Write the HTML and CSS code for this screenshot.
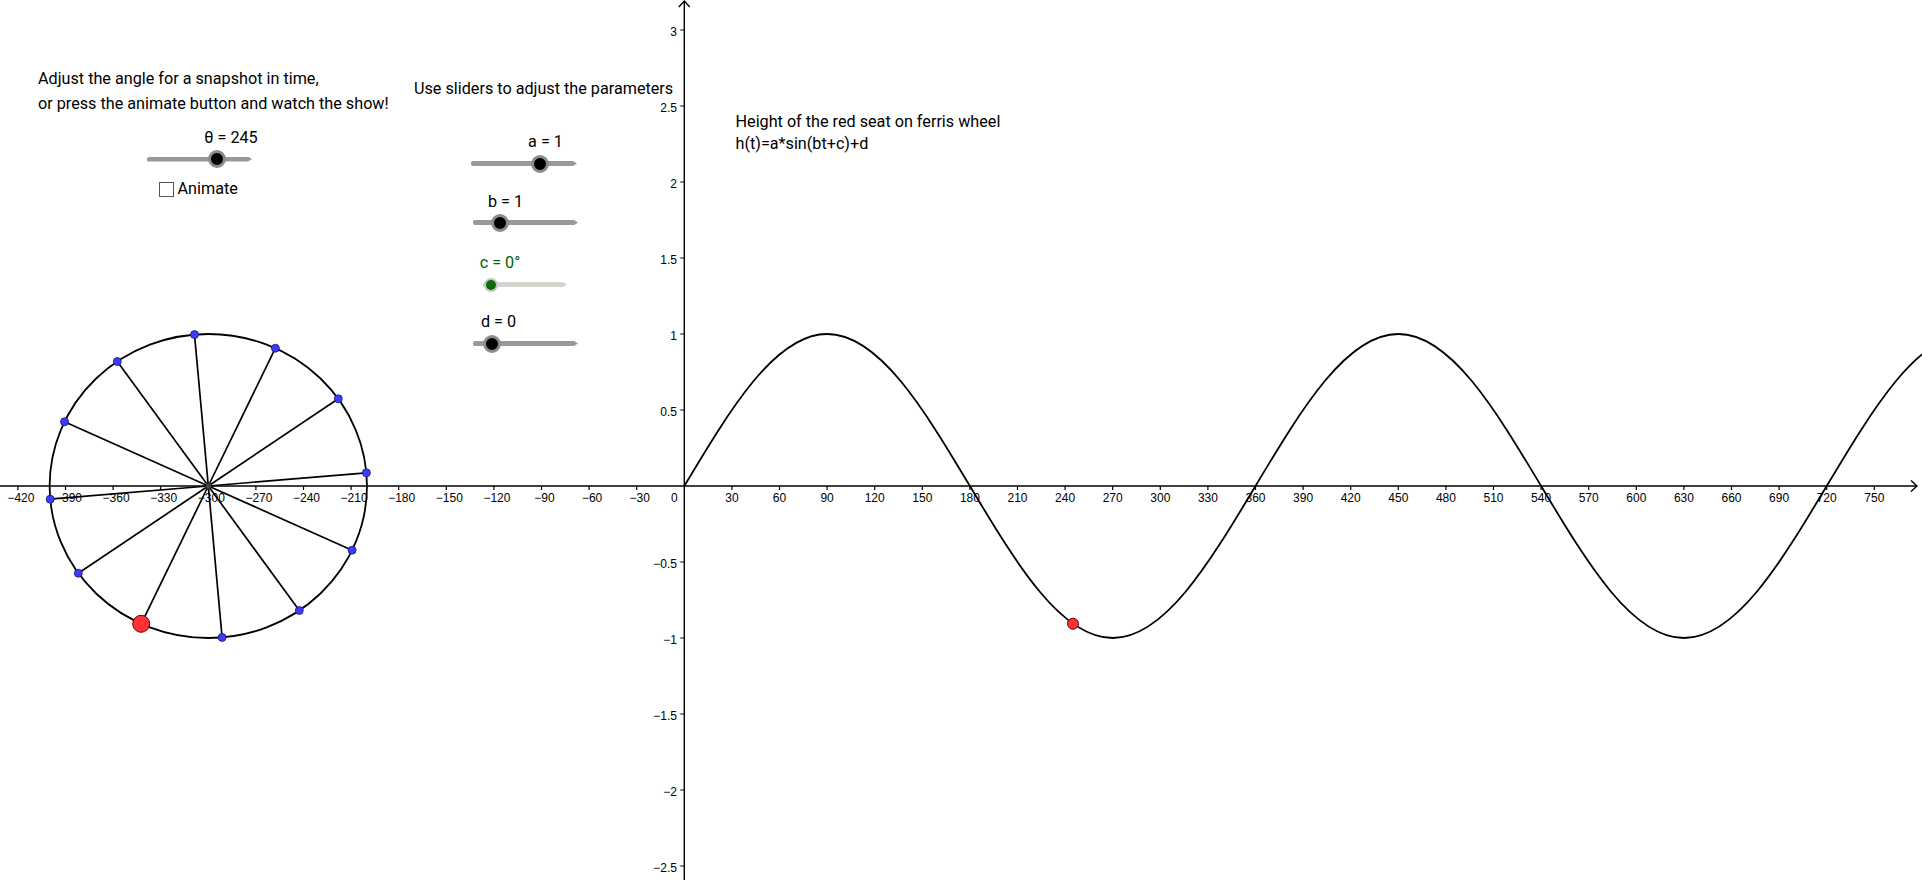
FILE: index.html
```html
<!DOCTYPE html>
<html>
<head>
<meta charset="utf-8">
<title>Ferris wheel</title>
<link rel="stylesheet" href="styles.css">
</head>
<body>
<div class="canvas">
  <svg class="graph" width="1922" height="880" viewBox="0 0 1922 880">
    <!-- axes -->
    <g class="axis">
      <line x1="0" y1="486" x2="1917" y2="486"/>
      <polyline points="1911,480.5 1917,486 1911,491.5" fill="none"/>
      <line x1="684.3" y1="880" x2="684.3" y2="1"/>
      <polyline points="678.8,7 684.3,1 689.8,7" fill="none"/>
    </g>
    <g class="ticks" transform="translate(684.3,486)">
      <path d="M-666.4,0v4M-618.8,0v4M-571.2,0v4M-523.6,0v4M-476,0v4M-428.4,0v4M-380.8,0v4M-333.2,0v4M-285.6,0v4M-238,0v4M-190.4,0v4M-142.8,0v4M-95.2,0v4M-47.6,0v4M47.6,0v4M95.2,0v4M142.8,0v4M190.4,0v4M238,0v4M285.6,0v4M333.2,0v4M380.8,0v4M428.4,0v4M476,0v4M523.6,0v4M571.2,0v4M618.8,0v4M666.4,0v4M714,0v4M761.6,0v4M809.2,0v4M856.8,0v4M904.4,0v4M952,0v4M999.6,0v4M1047.2,0v4M1094.8,0v4M1142.4,0v4M1190,0v4"/>
      <path d="M-4,-456h4M-4,-380h4M-4,-304h4M-4,-228h4M-4,-152h4M-4,-76h4M-4,76h4M-4,152h4M-4,228h4M-4,304h4M-4,380h4"/>
    </g>
    <g class="xlabels" transform="translate(684.3,502)">
      <text x="-663.4">−420</text><text x="-615.8">−390</text><text x="-568.2">−360</text><text x="-520.6">−330</text><text x="-473">−300</text><text x="-425.4">−270</text><text x="-377.8">−240</text><text x="-330.2">−210</text><text x="-282.6">−180</text><text x="-235">−150</text><text x="-187.4">−120</text><text x="-139.8">−90</text><text x="-92.2">−60</text><text x="-44.6">−30</text>
      <text x="-10">0</text>
      <text x="47.6">30</text><text x="95.2">60</text><text x="142.8">90</text><text x="190.4">120</text><text x="238">150</text><text x="285.6">180</text><text x="333.2">210</text><text x="380.8">240</text><text x="428.4">270</text><text x="476">300</text><text x="523.6">330</text><text x="571.2">360</text><text x="618.8">390</text><text x="666.4">420</text><text x="714">450</text><text x="761.6">480</text><text x="809.2">510</text><text x="856.8">540</text><text x="904.4">570</text><text x="952">600</text><text x="999.6">630</text><text x="1047.2">660</text><text x="1094.8">690</text><text x="1142.4">720</text><text x="1190">750</text>
    </g>
    <g class="ylabels" transform="translate(677,491.8)">
      <text y="-456">3</text><text y="-380">2.5</text><text y="-304">2</text><text y="-228">1.5</text><text y="-152">1</text><text y="-76">0.5</text><text y="76">−0.5</text><text y="152">−1</text><text y="228">−1.5</text><text y="304">−2</text><text y="380">−2.5</text>
    </g>

    <!-- sine curve -->
    <path class="curve" transform="translate(684.3,486) scale(90.91,-152)"
      d="M0,0 c0.5123,0.5123 1.0023,1 1.5708,1 c0.5685,0 1.0585,-0.4877 1.5708,-1 c0.5123,-0.5123 1.0023,-1 1.5708,-1 c0.5685,0 1.0585,0.4877 1.5708,1 c0.5123,0.5123 1.0023,1 1.5708,1 c0.5685,0 1.0585,-0.4877 1.5708,-1 c0.5123,-0.5123 1.0023,-1 1.5708,-1 c0.5685,0 1.0585,0.4877 1.5708,1 c0.5123,0.5123 1.0023,1 1.5708,1"/>

    <!-- ferris wheel -->
    <ellipse class="wheel" cx="208.3" cy="486" rx="158.67" ry="152"/>
    <g class="spokes">
      <line x1="208.3" y1="486" x2="141.2" y2="623.8"/>
      <line x1="208.3" y1="486" x2="222.1" y2="637.4"/>
      <line x1="208.3" y1="486" x2="299.3" y2="610.5"/>
      <line x1="208.3" y1="486" x2="352.1" y2="550.2"/>
      <line x1="208.3" y1="486" x2="366.4" y2="472.8"/>
      <line x1="208.3" y1="486" x2="338.3" y2="398.8"/>
      <line x1="208.3" y1="486" x2="275.4" y2="348.2"/>
      <line x1="208.3" y1="486" x2="194.5" y2="334.6"/>
      <line x1="208.3" y1="486" x2="117.3" y2="361.5"/>
      <line x1="208.3" y1="486" x2="64.5" y2="421.8"/>
      <line x1="208.3" y1="486" x2="50.2" y2="499.2"/>
      <line x1="208.3" y1="486" x2="78.3" y2="573.2"/>
    </g>
    <g class="seats">
      <circle cx="222.1" cy="637.4" r="4"/>
      <circle cx="299.3" cy="610.5" r="4"/>
      <circle cx="352.1" cy="550.2" r="4"/>
      <circle cx="366.4" cy="472.8" r="4"/>
      <circle cx="338.3" cy="398.8" r="4"/>
      <circle cx="275.4" cy="348.2" r="4"/>
      <circle cx="194.5" cy="334.6" r="4"/>
      <circle cx="117.3" cy="361.5" r="4"/>
      <circle cx="64.5" cy="421.8" r="4"/>
      <circle cx="50.2" cy="499.2" r="4"/>
      <circle cx="78.3" cy="573.2" r="4"/>
    </g>
    <circle class="hub" cx="208.3" cy="486" r="3"/>
    <circle class="red big" cx="141.2" cy="623.8" r="8.5"/>
    <circle class="red" cx="1073" cy="623.7" r="5.5"/>
  </svg>

  <div class="note note-left">Adjust the angle for a snapshot in time,<br>or press the animate button and watch the show!</div>
  <div class="note note-mid">Use sliders to adjust the parameters</div>
  <div class="note note-right">Height of the red seat on ferris wheel<br>h(t)=a*sin(bt+c)+d</div>

  <div class="label lab-theta">θ = 245</div>
  <div class="slider sl-theta"><div class="track"></div><div class="knob" style="left:70px"></div></div>
  <div class="check"><span class="box"></span><span class="check-text">Animate</span></div>

  <div class="label lab-a">a = 1</div>
  <div class="slider sl-a"><div class="track"></div><div class="knob" style="left:69px"></div></div>

  <div class="label lab-b">b = 1</div>
  <div class="slider sl-b"><div class="track"></div><div class="knob" style="left:27px"></div></div>

  <div class="label lab-c">c = 0°</div>
  <div class="slider sl-c light"><div class="track"></div><div class="knob" style="left:8px"></div></div>

  <div class="label lab-d">d = 0</div>
  <div class="slider sl-d"><div class="track"></div><div class="knob" style="left:19px"></div></div>
</div>
</body>
</html>
```

FILE: styles.css
```css
html, body {
  margin: 0;
  padding: 0;
  background: #ffffff;
}

.canvas {
  position: relative;
  width: 1922px;
  height: 880px;
  overflow: hidden;
  background: #ffffff;
  font-family: Roboto, "Noto Sans", "Liberation Sans", sans-serif;
  color: #000000;
}

.graph {
  position: absolute;
  left: 0;
  top: 0;
  display: block;
}

.axis line,
.axis polyline {
  stroke: #000000;
  stroke-width: 1.4;
}

.ticks path {
  stroke: #000000;
  stroke-width: 1.2;
  fill: none;
}

.xlabels text,
.ylabels text {
  font-family: "Liberation Sans", Arial, sans-serif;
  font-size: 12px;
  fill: #000000;
}

.xlabels text {
  text-anchor: middle;
}

.ylabels text {
  text-anchor: end;
}

.curve {
  fill: none;
  stroke: #000000;
  stroke-width: 1.8;
  vector-effect: non-scaling-stroke;
}

.wheel {
  fill: none;
  stroke: #000000;
  stroke-width: 1.8;
}

.spokes line {
  stroke: #000000;
  stroke-width: 1.7;
}

.seats circle {
  fill: #3b3bff;
  stroke: #1a1a66;
  stroke-width: 0.8;
}

.hub {
  fill: #444444;
  stroke: #222222;
  stroke-width: 0.6;
}

.red {
  fill: #ff3333;
  stroke: #6a0000;
  stroke-width: 1;
}

.note {
  position: absolute;
  font-size: 16.2px;
  white-space: nowrap;
}

.note-left {
  left: 38px;
  top: 65.5px;
  line-height: 25px;
}

.note-mid {
  left: 414px;
  top: 79px;
  line-height: 20px;
}

.note-right {
  left: 735.5px;
  top: 110.5px;
  line-height: 22.6px;
}

.label {
  position: absolute;
  font-size: 16.2px;
  line-height: 20px;
  white-space: nowrap;
  transform: translateX(-50%);
}

.lab-theta { left: 231px; top: 128px; }
.lab-a { left: 545.5px; top: 131.5px; }
.lab-b { left: 505.5px; top: 191.5px; }
.lab-c { left: 500px; top: 252.5px; color: #006400; }
.lab-d { left: 498.5px; top: 312px; }

.slider {
  position: absolute;
  height: 18px;
}

.slider .track {
  position: absolute;
  left: 0;
  right: 0;
  top: 6.5px;
  height: 5px;
  background: #999999;
  border-radius: 2px 0 0 2px;
  clip-path: polygon(0 0, calc(100% - 4px) 0, 100% 50%, calc(100% - 4px) 100%, 0 100%);
}

.slider .knob {
  position: absolute;
  top: 0;
  width: 12px;
  height: 12px;
  margin-left: -9px;
  border-radius: 50%;
  background: #000000;
  border: 3px solid #8c8c8c;
}

.sl-theta { left: 147px; top: 150px; width: 105px; }
.sl-a { left: 471px; top: 154.5px; width: 106px; }
.sl-b { left: 473px; top: 213.5px; width: 105px; }
.sl-c { left: 483px; top: 275.5px; width: 84px; }
.sl-d { left: 473px; top: 334.5px; width: 105px; }

.slider.light .track {
  background: #d3d6cf;
}

.slider.light .knob {
  top: 2px;
  width: 10px;
  height: 10px;
  margin-left: -7px;
  background: #0d6a0d;
  border: 2px solid #c6c6c6;
}

.check {
  position: absolute;
  left: 158.5px;
  top: 179px;
  display: flex;
  align-items: center;
  gap: 4px;
  font-size: 16.2px;
  line-height: 20px;
}

.check .box {
  width: 13px;
  height: 13px;
  border: 1px solid #555555;
  background: #ffffff;
  box-sizing: content-box;
}
```
